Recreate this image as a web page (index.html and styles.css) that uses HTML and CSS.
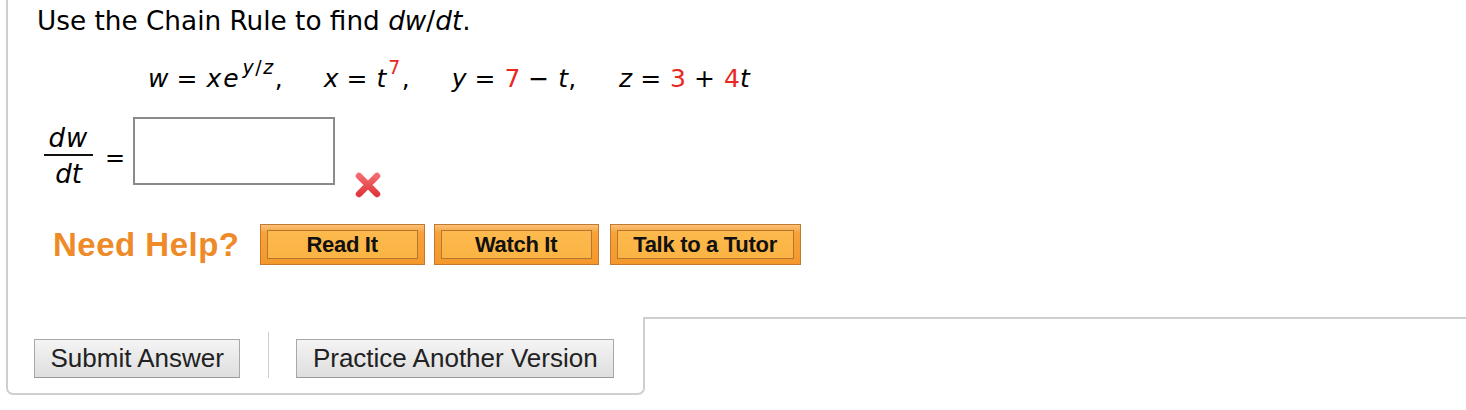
FILE: index.html
```html
<!DOCTYPE html>
<html>
<head>
<meta charset="utf-8">
<link rel="stylesheet" href="styles.css">
</head>
<body>
<div class="frame">
  <div class="question">
    <p class="prompt">Use the Chain Rule to find <i>dw</i>/<i>dt</i>.</p>
    <div class="eq">
      <span class="term t1"><i>w</i><span class="op">=</span><i class="xe">xe</i><span class="sup"><i>y</i>/<i>z</i></span>,</span>
      <span class="term t2"><i>x</i><span class="op">=</span><i>t</i><span class="sup red">7</span>,</span>
      <span class="term t3"><i>y</i><span class="op">=</span><span class="red">7</span><span class="op">−</span><i>t</i>,</span>
      <span class="term t4"><i>z</i><span class="op">=</span><span class="red">3</span><span class="op">+</span><span class="red">4</span><i>t</i></span>
    </div>
    <div class="answer-row">
      <div class="frac">
        <span class="num"><i>dw</i></span>
        <span class="bar"></span>
        <span class="den"><i>dt</i></span>
      </div>
      <span class="eqsign">=</span>
      <input class="answer" type="text">
      <svg class="wrong" width="28" height="28" viewBox="0 0 28 28">
        <defs>
          <linearGradient id="xg" x1="0" y1="0" x2="0" y2="1">
            <stop offset="0" stop-color="#f26a6e"/>
            <stop offset="1" stop-color="#e2383d"/>
          </linearGradient>
        </defs>
        <path d="M5 5 L23 23 M23 5 L5 23" stroke="url(#xg)" stroke-width="6.5" stroke-linecap="round" fill="none"/>
      </svg>
    </div>
    <div class="help-row">
      <span class="need">Need Help?</span>
      <button class="hbtn fixed"><span class="hin">Read It</span></button>
      <button class="hbtn fixed"><span class="hin">Watch It</span></button>
      <button class="hbtn tutor"><span class="hin">Talk to a Tutor</span></button>
    </div>
  </div>
  <div class="footer">
    <div class="actions">
      <button class="gbtn">Submit Answer</button>
      <span class="sep"></span>
      <button class="gbtn">Practice Another Version</button>
    </div>
    <div class="fill"></div>
  </div>
</div>
</body>
</html>
```

FILE: styles.css
```css
html, body {
  margin: 0;
  padding: 0;
  background: #ffffff;
}

.frame {
  margin-left: 6px;
  width: 1460px;
}

.question {
  border-left: 2px solid #cfcfcf;
  padding: 6px 0 52px 29px;
  font-family: "DejaVu Sans", Verdana, sans-serif;
  color: #000;
}

.prompt {
  margin: 0;
  font-size: 26.3px;
  line-height: 30px;
}

.eq {
  margin: 29px 0 0 111px;
  font-size: 25px;
  line-height: 28px;
  white-space: nowrap;
}

.term {
  margin-right: 33px;
}

.t1 {
  margin-right: 33px;
}

.t2 {
  margin-right: 34px;
}

.t3 {
  margin-right: 35px;
}

.xe {
  letter-spacing: 2px;
}

.op {
  margin: 0 9px 0 8px;
}

.sup {
  font-size: 19px;
  line-height: 0;
  vertical-align: 13px;
  letter-spacing: 1.5px;
  margin-left: 2px;
}

.red {
  color: #e8281f;
}

.answer-row {
  display: flex;
  align-items: flex-start;
  margin-top: 24px;
}

.frac {
  display: flex;
  flex-direction: column;
  align-items: center;
  width: 49px;
  margin-left: 7px;
  font-size: 26px;
  line-height: 28px;
}

.num {
  margin-top: 7px;
  letter-spacing: 1px;
}

.bar {
  align-self: stretch;
  height: 2px;
  background: #111;
  margin-top: 2px;
}

.den {
  margin-top: 4px;
}

.eqsign {
  align-self: center;
  margin-left: 12px;
  font-size: 24px;
  line-height: 28px;
}

.answer {
  box-sizing: border-box;
  width: 202px;
  height: 68px;
  margin: 0 0 0 8px;
  border: 2px solid #8a8a8a;
  background: #fff;
  padding: 0;
}

.wrong {
  margin: 54px 0 0 19px;
}

.help-row {
  display: flex;
  align-items: center;
  margin-top: 25px;
}

.need {
  margin-left: 16px;
  margin-right: 20px;
  font-family: "Liberation Sans", Arial, sans-serif;
  font-weight: bold;
  font-size: 33px;
  letter-spacing: 0.5px;
  color: #ef8a28;
}

.hbtn {
  box-sizing: border-box;
  height: 41px;
  margin-right: 9px;
  padding: 5px 6px;
  border: 1px solid #c47a2e;
  background: linear-gradient(#fbc27c 0, #f7a23a 20%, #f4982c 100%);
  font-family: "Liberation Sans", Arial, sans-serif;
  font-weight: bold;
  font-size: 22px;
  color: #111;
  cursor: pointer;
  display: flex;
}

.hbtn.fixed {
  width: 165px;
}

.hbtn.tutor {
  width: 191px;
  margin-left: 2px;
}

.hin {
  flex: 1;
  display: flex;
  align-items: center;
  justify-content: center;
  padding: 0;
  border: 1px solid #b5762f;
  background: linear-gradient(#fcb94d, #fbb443);
  letter-spacing: -0.3px;
}

.footer {
  display: flex;
}

.actions {
  display: flex;
  align-items: flex-end;
  border-left: 2px solid #cfcfcf;
  border-bottom: 2px solid #cfcfcf;
  border-right: 2px solid #cfcfcf;
  border-radius: 0 0 7px 7px;
  padding: 15px 29px 15px 26px;
}

.gbtn {
  box-sizing: border-box;
  height: 39px;
  padding: 0 15.5px;
  border: 1px solid #a8a8a8;
  border-bottom-color: #9a9a9a;
  background: linear-gradient(#f4f4f4, #dedede);
  font-family: "Liberation Sans", Arial, sans-serif;
  font-size: 26px;
  color: #222;
}

.sep {
  width: 1px;
  height: 46px;
  background: #cccccc;
  margin: 0 27px 0 28px;
}

.fill {
  flex: 1;
  border-top: 2px solid #cfcfcf;
}
```
